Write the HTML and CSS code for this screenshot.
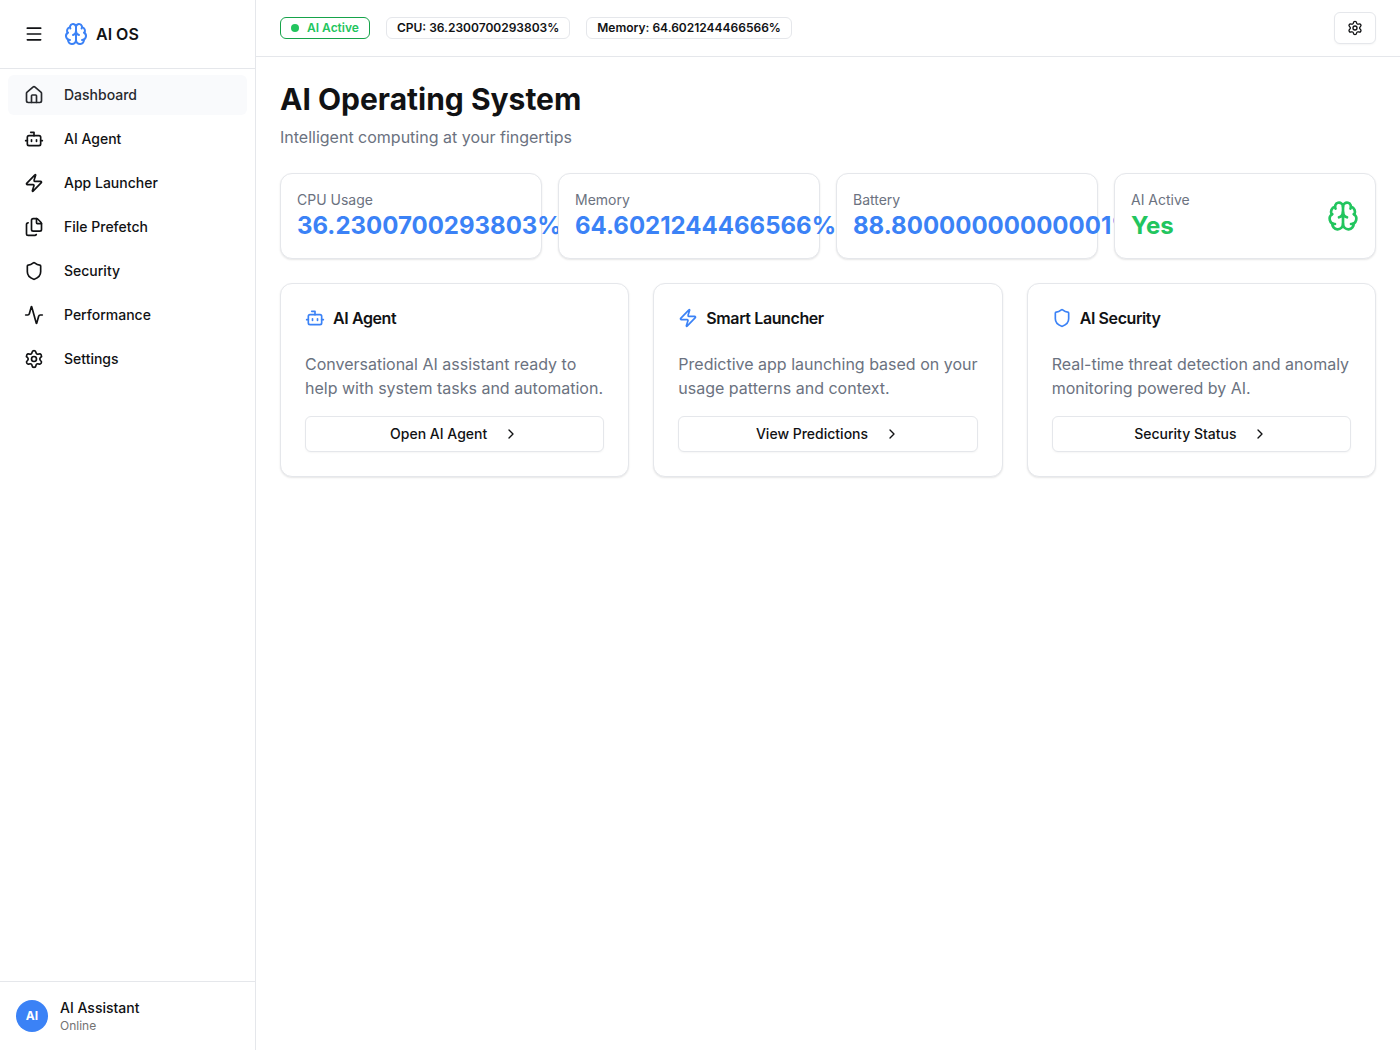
FILE: index.html
```html
<!DOCTYPE html>
<html lang="en">
<head>
  <meta charset="UTF-8" />
  <meta name="viewport" content="width=device-width, initial-scale=1" />
  <title>AI OS</title>
  <link rel="stylesheet" href="styles.css">
</head>
<body>

<!-- Icon sprite -->
<svg class="sprite" aria-hidden="true">
  <symbol id="i-menu" viewBox="0 0 24 24"><path d="M4 5h16"/><path d="M4 12h16"/><path d="M4 19h16"/></symbol>
  <symbol id="i-brain" viewBox="0 0 24 24">
    <path d="M12 18V5"/><path d="M15 13a4.17 4.17 0 0 1-3-4 4.17 4.17 0 0 1-3 4"/>
    <path d="M17.598 6.5A3 3 0 1 0 12 5a3 3 0 1 0-5.598 1.5"/><path d="M17.997 5.125a4 4 0 0 1 2.526 5.77"/>
    <path d="M18 18a4 4 0 0 0 2-7.464"/><path d="M19.967 17.483A4 4 0 1 1 12 18a4 4 0 1 1-7.967-.517"/>
    <path d="M6 18a4 4 0 0 1-2-7.464"/><path d="M6.003 5.125a4 4 0 0 0-2.526 5.77"/>
  </symbol>
  <symbol id="i-house" viewBox="0 0 24 24">
    <path d="M15 21v-8a1 1 0 0 0-1-1h-4a1 1 0 0 0-1 1v8"/>
    <path d="M3 10a2 2 0 0 1 .709-1.528l7-6a2 2 0 0 1 2.582 0l7 6A2 2 0 0 1 21 10v9a2 2 0 0 1-2 2H5a2 2 0 0 1-2-2z"/>
  </symbol>
  <symbol id="i-bot" viewBox="0 0 24 24">
    <path d="M12 8V4H8"/><rect width="16" height="12" x="4" y="8" rx="2"/>
    <path d="M2 14h2"/><path d="M20 14h2"/><path d="M15 13v2"/><path d="M9 13v2"/>
  </symbol>
  <symbol id="i-zap" viewBox="0 0 24 24"><path d="M4 14a1 1 0 0 1-.78-1.63l9.9-10.2a.5.5 0 0 1 .86.46l-1.92 6.02A1 1 0 0 0 13 10h7a1 1 0 0 1 .78 1.63l-9.9 10.2a.5.5 0 0 1-.86-.46l1.92-6.02A1 1 0 0 0 11 14z"/></symbol>
  <symbol id="i-files" viewBox="0 0 24 24">
    <path d="M15 2h-4a2 2 0 0 0-2 2v11a2 2 0 0 0 2 2h8a2 2 0 0 0 2-2V8"/>
    <path d="M16.706 2.706A2.4 2.4 0 0 0 15 2v5a1 1 0 0 0 1 1h5a2.4 2.4 0 0 0-.706-1.706z"/>
    <path d="M5 7a2 2 0 0 0-2 2v11a2 2 0 0 0 2 2h8a2 2 0 0 0 1.732-1"/>
  </symbol>
  <symbol id="i-shield" viewBox="0 0 24 24"><path d="M20 13c0 5-3.5 7.5-7.66 8.95a1 1 0 0 1-.67-.01C7.5 20.5 4 18 4 13V6a1 1 0 0 1 1-1c2 0 4.5-1.2 6.24-2.72a1.17 1.17 0 0 1 1.52 0C14.51 3.81 17 5 19 5a1 1 0 0 1 1 1z"/></symbol>
  <symbol id="i-activity" viewBox="0 0 24 24"><path d="M22 12h-2.48a2 2 0 0 0-1.93 1.46l-2.35 8.36a.25.25 0 0 1-.48 0L9.24 2.18a.25.25 0 0 0-.48 0l-2.35 8.36A2 2 0 0 1 4.49 12H2"/></symbol>
  <symbol id="i-settings" viewBox="0 0 24 24">
    <path d="M9.671 4.136a2.34 2.34 0 0 1 4.659 0 2.34 2.34 0 0 0 3.319 1.915 2.34 2.34 0 0 1 2.33 4.033 2.34 2.34 0 0 0 0 3.831 2.34 2.34 0 0 1-2.33 4.033 2.34 2.34 0 0 0-3.319 1.915 2.34 2.34 0 0 1-4.659 0 2.34 2.34 0 0 0-3.32-1.915 2.34 2.34 0 0 1-2.33-4.033 2.34 2.34 0 0 0 0-3.831A2.34 2.34 0 0 1 6.35 6.051a2.34 2.34 0 0 0 3.319-1.915"/>
    <circle cx="12" cy="12" r="3"/>
  </symbol>
  <symbol id="i-chevron" viewBox="0 0 24 24"><path d="m9 18 6-6-6-6"/></symbol>
</svg>

<div class="app">
  <aside class="sidebar">
    <div class="sidebar-header">
      <button class="menu-btn" type="button" aria-label="Toggle sidebar"><svg class="icon"><use href="#i-menu"/></svg></button>
      <div class="brand">
        <svg class="icon icon-md"><use href="#i-brain"/></svg>
        <span>AI OS</span>
      </div>
    </div>

    <nav class="nav">
      <a class="nav-item active" href="#dashboard"><svg class="icon"><use href="#i-house"/></svg>Dashboard</a>
      <a class="nav-item" href="#agent"><svg class="icon"><use href="#i-bot"/></svg>AI Agent</a>
      <a class="nav-item" href="#launcher"><svg class="icon"><use href="#i-zap"/></svg>App Launcher</a>
      <a class="nav-item" href="#prefetch"><svg class="icon"><use href="#i-files"/></svg>File Prefetch</a>
      <a class="nav-item" href="#security"><svg class="icon"><use href="#i-shield"/></svg>Security</a>
      <a class="nav-item" href="#performance"><svg class="icon"><use href="#i-activity"/></svg>Performance</a>
      <a class="nav-item" href="#settings"><svg class="icon"><use href="#i-settings"/></svg>Settings</a>
    </nav>

    <div class="sidebar-footer">
      <div class="avatar">AI</div>
      <div>
        <div class="user-name">AI Assistant</div>
        <div class="user-status">Online</div>
      </div>
    </div>
  </aside>

  <div class="content">
    <header class="topbar">
      <div class="badges">
        <span class="badge badge-active"><span class="dot"></span>AI Active</span>
        <span class="badge">CPU: 36.2300700293803%</span>
        <span class="badge">Memory: 64.6021244466566%</span>
      </div>
      <button class="btn btn-icon" type="button" aria-label="Settings"><svg class="icon icon-sm"><use href="#i-settings"/></svg></button>
    </header>

    <main class="main">
      <div>
        <h1>AI Operating System</h1>
        <p class="subtitle">Intelligent computing at your fingertips</p>
      </div>

      <section class="stats">
        <div class="card stat">
          <div>
            <p class="stat-label">CPU Usage</p>
            <p class="stat-value">36.2300700293803%</p>
          </div>
        </div>
        <div class="card stat">
          <div>
            <p class="stat-label">Memory</p>
            <p class="stat-value">64.6021244466566%</p>
          </div>
        </div>
        <div class="card stat">
          <div>
            <p class="stat-label">Battery</p>
            <p class="stat-value">88.80000000000001%</p>
          </div>
        </div>
        <div class="card stat">
          <div>
            <p class="stat-label">AI Active</p>
            <p class="stat-value green">Yes</p>
          </div>
          <svg class="icon icon-lg green"><use href="#i-brain"/></svg>
        </div>
      </section>

      <section class="features">
        <article class="card feature">
          <h2><svg class="icon"><use href="#i-bot"/></svg>AI Agent</h2>
          <p>Conversational AI assistant ready to help with system tasks and automation.</p>
          <button class="btn" type="button">Open AI Agent<svg class="icon icon-sm"><use href="#i-chevron"/></svg></button>
        </article>
        <article class="card feature">
          <h2><svg class="icon"><use href="#i-zap"/></svg>Smart Launcher</h2>
          <p>Predictive app launching based on your usage patterns and context.</p>
          <button class="btn" type="button">View Predictions<svg class="icon icon-sm"><use href="#i-chevron"/></svg></button>
        </article>
        <article class="card feature">
          <h2><svg class="icon"><use href="#i-shield"/></svg>AI Security</h2>
          <p>Real-time threat detection and anomaly monitoring powered by AI.</p>
          <button class="btn" type="button">Security Status<svg class="icon icon-sm"><use href="#i-chevron"/></svg></button>
        </article>
      </section>
    </main>
  </div>
</div>

</body>
</html>
```

FILE: styles.css
```css
:root {
  --text: #111214;
  --muted: #6b7280;
  --border: #e5e7eb;
  --blue: #3b82f6;
  --green: #22c55e;
}
* { box-sizing: border-box; margin: 0; padding: 0; }
body {
  font-family: Inter, "Liberation Sans", sans-serif;
  font-size: 16px;
  line-height: 24px;
  color: var(--text);
  background: #fff;
}
a { color: inherit; text-decoration: none; }
button { font: inherit; color: inherit; cursor: pointer; }

.sprite { display: none; }
.icon {
  width: 20px; height: 20px; flex-shrink: 0;
  fill: none; stroke: currentColor; stroke-width: 2;
  stroke-linecap: round; stroke-linejoin: round;
}
.icon-sm { width: 16px; height: 16px; }
.icon-md { width: 24px; height: 24px; }
.icon-lg { width: 32px; height: 32px; }

.app { display: flex; min-height: 100vh; }

/* Sidebar */
.sidebar {
  display: flex; flex-direction: column; flex-shrink: 0;
  width: 256px;
  border-right: 1px solid var(--border);
}
.sidebar-header {
  display: flex; align-items: center; gap: 12px;
  padding: 16px;
  border-bottom: 1px solid var(--border);
}
.menu-btn {
  display: flex; align-items: center; justify-content: center;
  width: 36px; height: 36px;
  border: 0; border-radius: 6px; background: none;
}
.brand { display: flex; align-items: center; gap: 8px; font-weight: 600; }
.brand .icon { color: var(--blue); }
.nav { display: flex; flex-direction: column; flex: 1; gap: 4px; padding: 6px 8px; }
.nav-item {
  display: flex; align-items: center; gap: 20px;
  height: 40px; padding: 0 16px;
  border-radius: 6px;
  font-size: 14px; font-weight: 500;
}
.nav-item.active { background: #f9fafc; color: #27292d; }
.sidebar-footer {
  display: flex; align-items: center; gap: 12px;
  padding: 16px;
  border-top: 1px solid var(--border);
}
.avatar {
  display: flex; align-items: center; justify-content: center;
  width: 32px; height: 32px; border-radius: 50%;
  background: var(--blue); color: #fff;
  font-size: 12px; font-weight: 700;
}
.user-name { font-size: 14px; line-height: 20px; font-weight: 500; }
.user-status { font-size: 12px; line-height: 16px; color: #737373; }

/* Top bar */
.content { flex: 1; min-width: 0; }
.topbar {
  display: flex; align-items: center; justify-content: space-between;
  padding: 12px 24px;
  border-bottom: 1px solid var(--border);
}
.badges { display: flex; align-items: center; gap: 16px; }
.badge {
  display: flex; align-items: center; gap: 8px;
  padding: 2px 10px;
  border: 1px solid var(--border); border-radius: 6px;
  font-size: 12px; line-height: 16px; font-weight: 600;
}
.badge-active { border-color: #16a34a; color: var(--green); }
.dot { width: 8px; height: 8px; border-radius: 50%; background: var(--green); }
.btn {
  display: flex; align-items: center; justify-content: center; gap: 16px;
  height: 36px; padding: 0 16px;
  border: 1px solid var(--border); border-radius: 6px;
  background: #fff;
  font-size: 14px; line-height: 20px; font-weight: 500;
  box-shadow: 0 1px 2px rgba(0, 0, 0, 0.04);
}
.btn-icon { height: 32px; padding: 0 12px; }

/* Dashboard */
.main { display: flex; flex-direction: column; gap: 24px; padding: 24px; }
h1 { font-size: 30px; line-height: 36px; font-weight: 700; margin-bottom: 8px; }
.subtitle { color: var(--muted); }
.card {
  background: #fff;
  border: 1px solid var(--border); border-radius: 12px;
  box-shadow: 0 1px 2px rgba(0, 0, 0, 0.1);
}
.stats { display: grid; grid-template-columns: repeat(4, minmax(0, 1fr)); gap: 16px; }
.stat {
  position: relative;
  display: flex; align-items: center; justify-content: space-between;
  padding: 16px;
}
.stat-label { font-size: 14px; line-height: 20px; color: var(--muted); }
.stat-value { font-size: 24px; line-height: 32px; font-weight: 700; color: var(--blue); }
.green, .stat-value.green { color: var(--green); }
.features { display: grid; grid-template-columns: repeat(3, minmax(0, 1fr)); gap: 24px; }
.feature { padding: 24px; }
.feature h2 {
  display: flex; align-items: center; gap: 8px;
  margin-bottom: 24px;
  font-size: 16px; line-height: 20px; font-weight: 600;
  letter-spacing: -0.025em;
}
.feature h2 .icon { color: var(--blue); }
.feature p { margin-bottom: 16px; color: var(--muted); }
.feature .btn { width: 100%; }
```
